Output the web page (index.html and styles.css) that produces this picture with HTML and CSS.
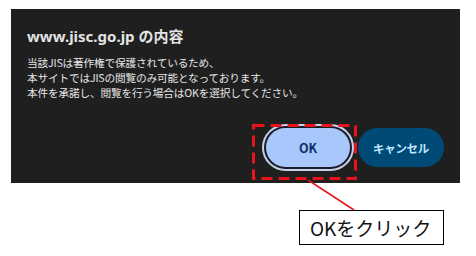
FILE: index.html
```html
<!DOCTYPE html>
<html lang="ja">
<head>
<meta charset="utf-8">
<link rel="stylesheet" href="styles.css">
</head>
<body>
<div class="page">
  <div class="dialog">
    <h1 class="title">www.jisc.go.jp の内容</h1>
    <div class="message">
      <p>当該JISは著作権で保護されているため、</p>
      <p>本サイトではJISの閲覧のみ可能となっております。</p>
      <p>本件を承諾し、閲覧を行う場合はOKを選択してください。</p>
    </div>
    <div class="actions">
      <button class="btn btn-ok">OK</button>
      <button class="btn btn-cancel">キャンセル</button>
    </div>
  </div>
  <svg class="annot" width="476" height="256" viewBox="0 0 476 256">
    <rect x="253.5" y="125.5" width="102" height="53" fill="none" stroke="#e8141c" stroke-width="3" stroke-dasharray="11 6"/>
    <line x1="308" y1="180" x2="354" y2="210" stroke="#e8141c" stroke-width="1.5"/>
  </svg>
  <div class="callout">OKをクリック</div>
</div>
</body>
</html>
```
FILE: styles.css
```css
html, body {
  margin: 0;
  padding: 0;
  background: #ffffff;
}
.page {
  position: relative;
  width: 476px;
  height: 256px;
  padding: 9px 0 0 11px;
  box-sizing: border-box;
}
.dialog {
  width: 449px;
  height: 174px;
  background: #1f1f1f;
  box-sizing: border-box;
  padding: 17px 16px 0 16px;
  display: flex;
  flex-direction: column;
}
.title {
  margin: 0;
  font-family: "Noto Sans", "Noto Sans CJK JP", sans-serif;
  font-weight: 700;
  font-size: 15px;
  line-height: 20px;
  color: #e3e3e3;
}
.message {
  margin-top: 9px;
  font-family: "Noto Sans CJK JP", sans-serif;
  font-size: 10.7px;
  line-height: 15px;
  letter-spacing: -0.2px;
  color: #e6e6e6;
}
.message p {
  margin: 0;
}
.actions {
  display: flex;
  justify-content: flex-end;
  align-items: center;
  gap: 8px;
  margin-top: 28px;
}
.btn {
  border: none;
  border-radius: 20px;
  height: 39px;
  width: 86px;
  font-family: "Noto Sans CJK JP", sans-serif;
  font-weight: 700;
  font-size: 12.5px;
  padding: 0;
}
.btn-ok {
  background: #a8c7fa;
  color: #0b2e6b;
  width: 84px;
  box-shadow: 0 0 0 2px #1a1b24, 0 0 0 4px #c6d2ea;
}
.btn-cancel {
  background: #004a77;
  color: #c2e7ff;
  font-size: 11.5px;
  letter-spacing: -0.3px;
}
.annot {
  position: absolute;
  left: 0;
  top: 0;
}
.callout {
  position: absolute;
  left: 299px;
  top: 210px;
  width: 145px;
  height: 35px;
  box-sizing: border-box;
  border: 1px solid #000;
  background: #fff;
  font-family: "Noto Sans CJK JP", sans-serif;
  font-size: 19px;
  line-height: 33px;
  padding-left: 10px;
  color: #111;
}
```
